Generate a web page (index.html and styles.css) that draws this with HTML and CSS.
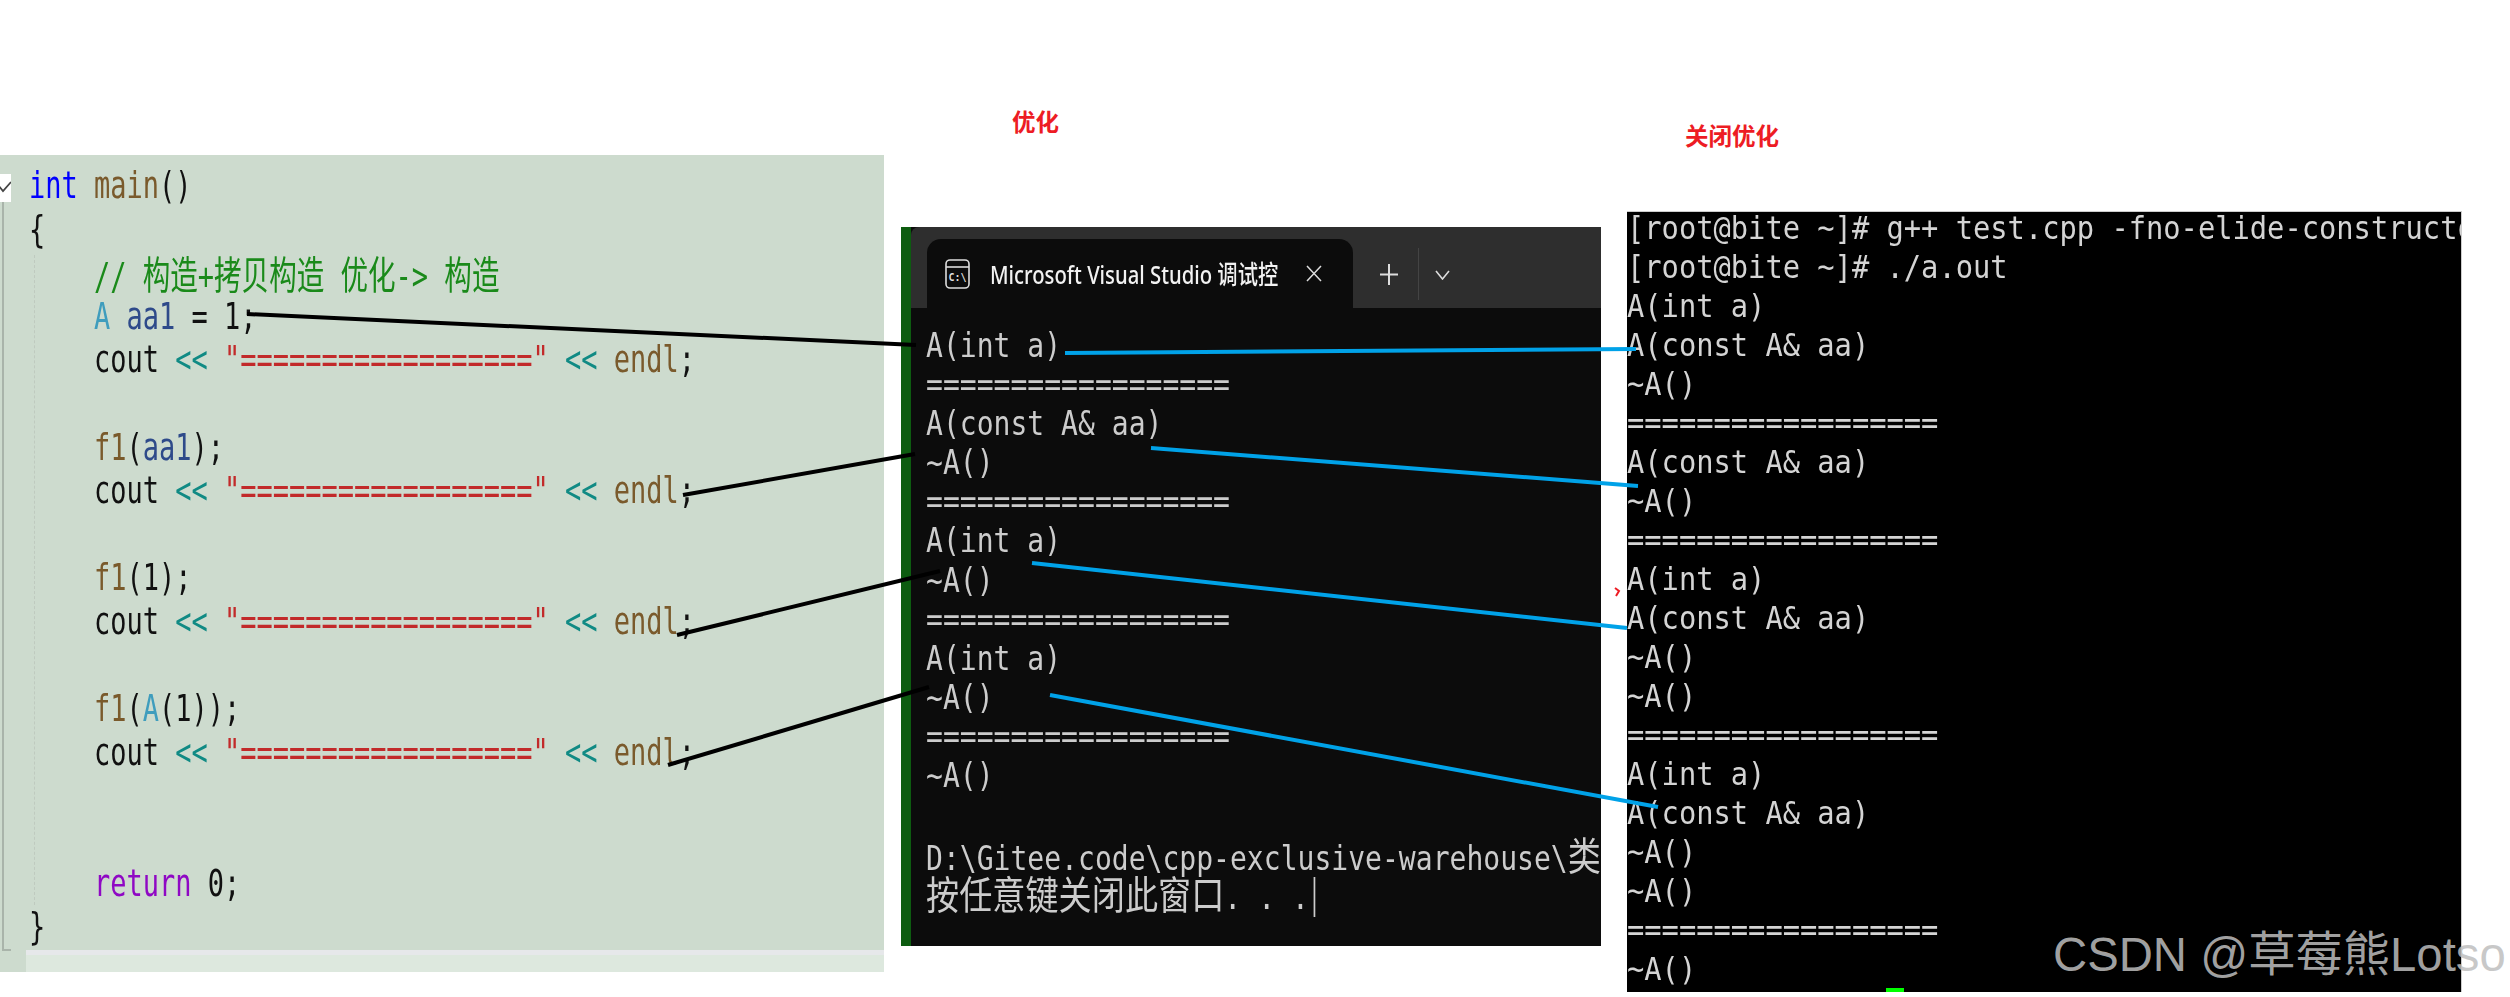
FILE: index.html
```html
<!DOCTYPE html>
<html lang="zh">
<head>
<meta charset="utf-8">
<title>优化</title>
<link rel="stylesheet" href="styles.css">
</head>
<body>
<main class="canvas">
  <section class="code-panel">
    <div class="fold-box">
      <svg class="fold-icon" viewBox="0 0 11 28"><path d="M-2 11 L3 17 L11 8" fill="none" stroke="#444" stroke-width="1.8"/></svg>
    </div>
    <div class="gutter-line"></div>
    <div class="gutter-tick"></div>
    <div class="indent-guide"></div>
    <div class="code-text">
      <div class="ln"><span class="kw">int</span> <span class="fn">main</span>()</div>
      <div class="ln">{</div>
      <div class="ln">    <span class="cm">// <span class="cjk">构造</span>+<span class="cjk">拷贝构造</span> <span class="cjk">优化</span>-&gt; <span class="cjk">构造</span></span></div>
      <div class="ln">    <span class="ty">A</span> <span class="var">aa1</span> = 1;</div>
      <div class="ln">    cout <span class="op">&lt;&lt;</span> <span class="str">"=================="</span> <span class="op">&lt;&lt;</span> <span class="fn">endl</span>;</div>
      <div class="ln"> </div>
      <div class="ln">    <span class="fn">f1</span>(<span class="var">aa1</span>);</div>
      <div class="ln">    cout <span class="op">&lt;&lt;</span> <span class="str">"=================="</span> <span class="op">&lt;&lt;</span> <span class="fn">endl</span>;</div>
      <div class="ln"> </div>
      <div class="ln">    <span class="fn">f1</span>(1);</div>
      <div class="ln">    cout <span class="op">&lt;&lt;</span> <span class="str">"=================="</span> <span class="op">&lt;&lt;</span> <span class="fn">endl</span>;</div>
      <div class="ln"> </div>
      <div class="ln">    <span class="fn">f1</span>(<span class="ty">A</span>(1));</div>
      <div class="ln">    cout <span class="op">&lt;&lt;</span> <span class="str">"=================="</span> <span class="op">&lt;&lt;</span> <span class="fn">endl</span>;</div>
      <div class="ln"> </div>
      <div class="ln"> </div>
      <div class="ln">    <span class="ret">return</span> 0;</div>
      <div class="ln">}</div>
    </div>
    <div class="code-footer"></div>
  </section>

  <h2 class="label label-opt">优化</h2>
  <h2 class="label label-noopt">关闭优化</h2>

  <section class="vs-window">
    <div class="vs-accent"></div>
    <div class="vs-main">
      <header class="vs-tabstrip">
        <div class="vs-tab">
          <svg class="vs-icon" viewBox="0 0 25 30">
            <rect x="1" y="1" width="23" height="28" rx="4" fill="none" stroke="#ddd" stroke-width="1.6"/>
            <path d="M1 8 H24" stroke="#ddd" stroke-width="1.6"/>
            <text x="12.5" y="22" text-anchor="middle" class="vs-icon-text">C:\</text>
          </svg>
          <span class="vs-title">Microsoft Visual Studio <span class="vs-title-cjk">调试控</span></span>
          <svg class="vs-close" viewBox="0 0 16 17"><path d="M1 1 L15 16 M15 1 L1 16" stroke="#ddd" stroke-width="1.5" fill="none"/></svg>
        </div>
        <svg class="vs-plus" viewBox="0 0 18 21"><path d="M9 0 V21 M0 10.5 H18" stroke="#ddd" stroke-width="2" fill="none"/></svg>
        <div class="vs-sep"></div>
        <svg class="vs-chevron" viewBox="0 0 15 10"><path d="M1 1 L7.5 9 L14 1" stroke="#ddd" stroke-width="1.6" fill="none"/></svg>
      </header>
      <div class="vs-console">
        <div class="vs-text">
          <div class="tl">A(int a)</div>
          <div class="tl">==================</div>
          <div class="tl">A(const A&amp; aa)</div>
          <div class="tl">~A()</div>
          <div class="tl">==================</div>
          <div class="tl">A(int a)</div>
          <div class="tl">~A()</div>
          <div class="tl">==================</div>
          <div class="tl">A(int a)</div>
          <div class="tl">~A()</div>
          <div class="tl">==================</div>
          <div class="tl">~A()</div>
          <div class="tl"> </div>
          <div class="tl">D:\Gitee.code\cpp-exclusive-warehouse\<span class="cjk-term">类</span></div>
          <div class="tl"><span class="cjk-term">按任意键关闭此窗口</span>. . .<span class="caret"></span></div>
        </div>
      </div>
    </div>
  </section>

  <section class="linux-term">
    <div class="lx-text">
      <div class="xl">[root@bite ~]# g++ test.cpp -fno-elide-constructors</div>
      <div class="xl">[root@bite ~]# ./a.out</div>
      <div class="xl">A(int a)</div>
      <div class="xl">A(const A&amp; aa)</div>
      <div class="xl">~A()</div>
      <div class="xl">==================</div>
      <div class="xl">A(const A&amp; aa)</div>
      <div class="xl">~A()</div>
      <div class="xl">==================</div>
      <div class="xl">A(int a)</div>
      <div class="xl">A(const A&amp; aa)</div>
      <div class="xl">~A()</div>
      <div class="xl">~A()</div>
      <div class="xl">==================</div>
      <div class="xl">A(int a)</div>
      <div class="xl">A(const A&amp; aa)</div>
      <div class="xl">~A()</div>
      <div class="xl">~A()</div>
      <div class="xl">==================</div>
      <div class="xl">~A()</div>
    </div>
    <div class="lx-cursor"></div>
  </section>

  <svg class="connectors" viewBox="0 0 2510 997">
    <g class="c-black">
      <path d="M247 314 L916 345"/>
      <path d="M683 495 L915 454"/>
      <path d="M677 635 L940 571"/>
      <path d="M668 765 L929 687"/>
    </g>
    <g class="c-blue">
      <path d="M1065 353 L1636 349"/>
      <path d="M1151 448 L1638 486"/>
      <path d="M1032 563 L1627 628"/>
      <path d="M1050 695 L1658 807"/>
    </g>
    <path class="c-mark" d="M1615 588 L1619 591 L1616 596"/>
  </svg>

  <div class="watermark">CSDN @草莓熊Lotso</div>
</main>
</body>
</html>
```
FILE: styles.css
```css
html, body {
  margin: 0;
  padding: 0;
  background: #fff;
  overflow: hidden;
}

.canvas {
  position: relative;
  width: 2510px;
  height: 997px;
  overflow: hidden;
  background: #fff;
}

/* code editor */
.code-panel {
  position: absolute;
  left: 0;
  top: 155px;
  width: 884px;
  height: 817px;
  background: #cddbce;
  overflow: hidden;
}

.fold-box {
  position: absolute;
  left: 0;
  top: 19px;
  width: 11px;
  height: 28px;
  background: #fff;
}

.fold-icon {
  display: block;
  width: 11px;
  height: 28px;
}

.gutter-line {
  position: absolute;
  left: 2px;
  top: 47px;
  width: 2px;
  height: 748px;
  background: #a9b4aa;
}

.gutter-tick {
  position: absolute;
  left: 2px;
  top: 794px;
  width: 9px;
  height: 2px;
  background: #a9b4aa;
}

.indent-guide {
  position: absolute;
  left: 34px;
  top: 100px;
  height: 650px;
  border-left: 1px dashed #bfcabf;
}

.code-text {
  width: 1245px;
  padding: 9px 0 0 29px;
  font-family: "DejaVu Sans Mono", "Noto Sans CJK SC", monospace;
  font-size: 38px;
  line-height: 43.6px;
  color: #111;
  transform: scaleX(0.71);
  transform-origin: 29px 0;
  filter: blur(0.5px);
}

.ln {
  height: 43.6px;
  white-space: pre;
}

.kw { color: #0000ff; }
.fn { color: #7a5a2c; }
.cm { color: #1a8a1a; }
.ty { color: #3f9dbd; }
.var { color: #2e4a8a; }
.op { color: #108a84; }
.str { color: #c22a2a; }
.ret { color: #8f08c4; }
.cjk { font-family: "Noto Sans CJK SC", sans-serif; font-size: 38.8px; }

.code-footer {
  position: absolute;
  left: 26px;
  right: 0;
  bottom: 0;
  height: 17px;
  background: #dde8de;
  border-top: 5px solid #e6e8ea;
}

/* red labels */
.label {
  position: absolute;
  margin: 0;
  font-family: "Noto Sans CJK SC", sans-serif;
  font-size: 23.5px;
  line-height: 24px;
  font-weight: 700;
  color: #ed1c24;
}

.label-opt { left: 1012px; top: 109px; }
.label-noopt { left: 1685px; top: 123px; }

/* Visual Studio console window */
.vs-window {
  position: absolute;
  left: 901px;
  top: 227px;
  width: 700px;
  height: 719px;
  display: flex;
  background: #0c0c0c;
}

.vs-accent {
  flex: none;
  width: 10px;
  background: #0d5c10;
}

.vs-main {
  flex: 1;
  min-width: 0;
  display: flex;
  flex-direction: column;
}

.vs-tabstrip {
  flex: none;
  height: 81px;
  display: flex;
  align-items: flex-end;
  padding-left: 16px;
  background: #2e2e2e;
  border-top-left-radius: 8px;
}

.vs-tab {
  flex: none;
  box-sizing: border-box;
  width: 426px;
  height: 69px;
  display: flex;
  align-items: center;
  padding: 0 0 0 18px;
  background: #0c0c0c;
  border-radius: 14px 14px 0 0;
}

.vs-icon {
  flex: none;
  width: 25px;
  height: 30px;
}

.vs-icon-text {
  font-family: "DejaVu Sans Mono", monospace;
  font-size: 10px;
  font-weight: 700;
  fill: #ddd;
}

.vs-title {
  flex: none;
  width: 291px;
  margin-left: 20px;
  font-family: "Noto Sans", "Noto Sans CJK SC", sans-serif;
  font-size: 26px;
  font-weight: 500;
  line-height: 30px;
  color: #f2f2f2;
  white-space: nowrap;
  transform: scaleX(0.78);
  transform-origin: 0 50%;
  filter: blur(0.4px);
}

.vs-title-cjk {
  font-family: "Noto Sans CJK SC", sans-serif;
  font-size: 26px;
}

.vs-close {
  flex: none;
  width: 16px;
  height: 17px;
  margin-left: 25px;
}

.vs-plus {
  flex: none;
  width: 18px;
  height: 21px;
  margin: 0 0 23px 27px;
}

.vs-sep {
  flex: none;
  width: 1px;
  height: 52px;
  margin: 0 0 8px 20px;
  background: #444;
}

.vs-chevron {
  flex: none;
  width: 15px;
  height: 10px;
  margin: 0 0 28px 16px;
}

.vs-console {
  flex: 1;
  min-height: 0;
  overflow: hidden;
}

.vs-text {
  width: 800px;
  padding: 18px 0 0 15px;
  font-family: "DejaVu Sans Mono", "Noto Sans CJK SC", monospace;
  font-size: 33px;
  line-height: 39.1px;
  color: #cccccc;
  transform: scaleX(0.85);
  transform-origin: 15px 0;
  filter: blur(0.5px);
}

.tl {
  height: 39.1px;
  white-space: pre;
}

.cjk-term {
  font-family: "Noto Sans CJK SC", sans-serif;
  font-size: 39px;
}

.caret {
  display: inline-block;
  width: 2px;
  height: 40px;
  margin-left: 6px;
  vertical-align: -8px;
  background: #ccc;
}

/* Linux terminal */
.linux-term {
  position: absolute;
  left: 1627px;
  top: 211px;
  box-sizing: border-box;
  width: 835px;
  height: 781px;
  background: #000;
  border-top: 1px solid #ccc;
  border-right: 1px solid #ccc;
  overflow: hidden;
}

.lx-text {
  width: 1000px;
  font-family: "DejaVu Sans Mono", monospace;
  font-size: 32px;
  line-height: 39.05px;
  margin-top: -3.5px;
  color: #d4d4d4;
  transform: scaleX(0.898);
  transform-origin: 0 0;
  filter: blur(0.5px);
}

.xl {
  height: 39.05px;
  white-space: pre;
}

.lx-cursor {
  position: absolute;
  left: 259px;
  bottom: 0;
  width: 18px;
  height: 4px;
  background: #00ff00;
}

/* connectors */
.connectors {
  position: absolute;
  left: 0;
  top: 0;
  width: 2510px;
  height: 997px;
  pointer-events: none;
}

.c-black path {
  fill: none;
  stroke: #000;
  stroke-width: 4;
}

.c-blue path {
  fill: none;
  stroke: #00a2e8;
  stroke-width: 4;
}

.c-mark {
  fill: none;
  stroke: #ed1c24;
  stroke-width: 2;
}

/* watermark */
.watermark {
  position: absolute;
  left: 2053px;
  top: 928px;
  font-family: "Liberation Sans", "Noto Sans CJK SC", sans-serif;
  font-size: 47.3px;
  line-height: 54px;
  color: rgba(190, 190, 190, 0.85);
  white-space: nowrap;
}
```
